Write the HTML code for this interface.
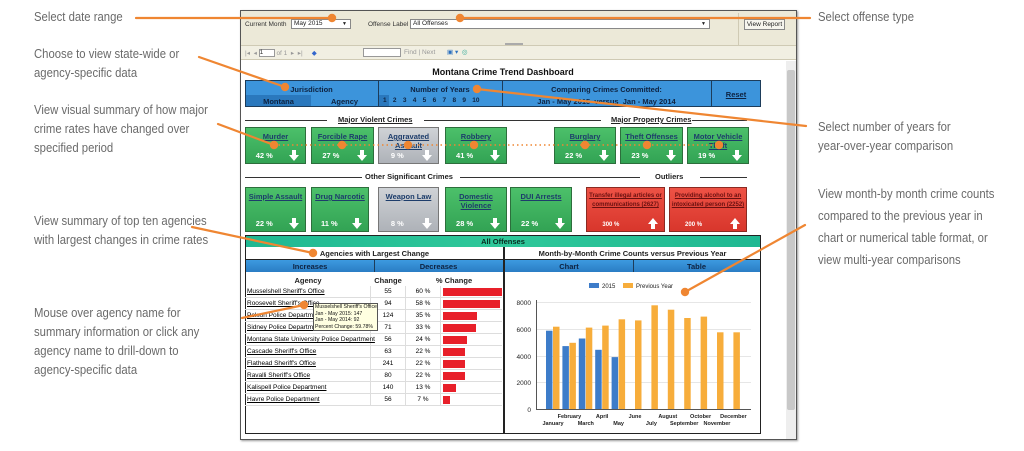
<!DOCTYPE html>
<html><head><meta charset="utf-8"><style>
*{margin:0;padding:0;box-sizing:border-box}
body{width:1024px;height:451px;background:#fff;position:relative;overflow:hidden;font-family:"Liberation Sans",sans-serif}
.a{position:absolute}
.ann{position:absolute;font-family:"Liberation Sans",sans-serif;font-size:13px;color:#6a6a6a;line-height:19px;white-space:nowrap;transform:scaleX(0.87);transform-origin:0 0}
.t{position:absolute;font-size:7.5px;font-weight:bold;text-align:center;border:1px solid #2d6e3c;background:linear-gradient(#4cc06a,#32a354);color:#1d3d6b}
.t.g{background:linear-gradient(#cfd2d6,#aeb2b8);border-color:#777}
.t.r{background:linear-gradient(#ee5245,#d8362c);border-color:#8a2a22;color:#6a1010}
.t .n{text-decoration:underline;margin-top:4px;line-height:9px}
.t .p{position:absolute;bottom:3px;left:0;width:62%;text-align:center;color:#fff}
.t svg{position:absolute;right:6px;bottom:2px}
.s{font-size:7.5px;font-weight:bold;color:#222}
.sm{font-size:6.5px;color:#222}
.row{position:absolute;left:245px;width:257px;height:12px;border-bottom:1px solid #ddd;font-size:6.5px;line-height:12px}
.row span{position:absolute;white-space:nowrap}
</style></head><body>

<div class="ann" style="left:34px;top:7px">Select date range</div>
<div class="ann" style="left:34px;top:44px">Choose to view state-wide or<br>agency-specific data</div>
<div class="ann" style="left:34px;top:100px">View visual summary of how major<br>crime rates have changed over<br>specified period</div>
<div class="ann" style="left:34px;top:211px">View summary of top ten agencies<br>with largest changes in crime rates</div>
<div class="ann" style="left:34px;top:303px">Mouse over agency name for<br>summary information or click any<br>agency name to drill-down to<br>agency-specific data</div>
<div class="ann" style="left:818px;top:7px">Select offense type</div>
<div class="ann" style="left:818px;top:117px">Select number of years for<br>year-over-year comparison</div>
<div class="ann" style="left:818px;top:183px;line-height:22px">View month-by month crime counts<br>compared to the previous year in<br>chart or numerical table format, or<br>view multi-year comparisons</div>

<div class="a" style="left:240px;top:10px;width:557px;height:430px;border:1px solid #555;background:#fff;box-shadow:1px 1px 2px #999"></div>
<div class="a" style="left:241px;top:11px;width:555px;height:35px;background:#ece9d8;border-bottom:1px solid #cfcab4"></div>
<div class="a" style="left:241px;top:46px;width:555px;height:14px;background:#f1efe2;border-bottom:1px solid #cfcab4"></div>
<div class="a sm" style="left:245px;top:21px;color:#333">Current Month</div>
<div class="a sm" style="left:291px;top:19px;width:60px;height:10px;border:1px solid #888;background:#fff;padding-left:2px;line-height:8px">May 2015<span style="position:absolute;right:3px;font-size:5px">▼</span></div>
<div class="a sm" style="left:368px;top:21px;color:#333">Offense Label</div>
<div class="a sm" style="left:410px;top:19px;width:300px;height:10px;border:1px solid #888;background:#fff;padding-left:2px;line-height:8px">All Offenses<span style="position:absolute;right:3px;font-size:5px">▼</span></div>
<div class="a" style="left:738px;top:13px;width:1px;height:32px;background:#cfcab4"></div>
<div class="a sm" style="left:744px;top:19px;width:41px;height:11px;border:1px solid #888;background:#f6f5ee;text-align:center;line-height:9px">View Report</div>
<div class="a" style="left:505px;top:43px;width:18px;height:2px;background:#aaa"></div>
<div class="a sm" style="left:245px;top:49px;color:#999">|◂ &nbsp;◂ <span style="display:inline-block;width:16px;height:8px;border:1px solid #999;background:#fff;vertical-align:middle;color:#333;line-height:6px">1</span> of 1 &nbsp;▸ &nbsp;▸| &nbsp;&nbsp;&nbsp;&nbsp;<span style="color:#36c">◆</span></div>
<div class="a" style="left:363px;top:48px;width:38px;height:9px;border:1px solid #999;background:#fff"></div>
<div class="a sm" style="left:404px;top:49px;color:#999">Find | Next</div>
<div class="a sm" style="left:447px;top:48px;color:#2a6fbf">▣ ▾ &nbsp;<span style="color:#3a9">◎</span></div>
<div class="a" style="left:786px;top:61px;width:10px;height:378px;background:#eee"></div>
<div class="a" style="left:787px;top:70px;width:8px;height:340px;background:#c8c8c8;border-radius:2px"></div>

<div class="a" style="left:245px;top:67px;width:516px;text-align:center;font-size:9px;font-weight:bold;color:#111">Montana Crime Trend Dashboard</div>

<div class="a" style="left:245px;top:80px;width:516px;height:27px;background:#3c94db;border:1px solid #1d3c5a"></div>
<div class="a" style="left:246px;top:95px;width:65px;height:11px;background:#2a78bd"></div>
<div class="a" style="left:378px;top:81px;width:1px;height:25px;background:#1d3c5a"></div>
<div class="a" style="left:502px;top:81px;width:1px;height:25px;background:#1d3c5a"></div>
<div class="a" style="left:711px;top:81px;width:1px;height:25px;background:#1d3c5a"></div>
<div class="a" style="left:379px;top:95px;width:10px;height:11px;background:#2a78bd"></div>
<div class="a s" style="left:245px;top:85px;width:133px;text-align:center;color:#0d2240">Jurisdiction</div>
<div class="a s" style="left:246px;top:97px;width:65px;text-align:center;color:#0d2240">Montana</div>
<div class="a s" style="left:311px;top:97px;width:67px;text-align:center;color:#0d2240">Agency</div>
<div class="a s" style="left:378px;top:85px;width:124px;text-align:center;color:#0d2240">Number of Years</div>
<div class="a" style="left:383px;top:97px;font-size:6.5px;font-weight:bold;color:#0d2240;word-spacing:4.5px">1 2 3 4 5 6 7 8 9 10</div>
<div class="a s" style="left:502px;top:85px;width:209px;text-align:center;color:#0d2240">Comparing Crimes Committed:</div>
<div class="a s" style="left:502px;top:97px;width:209px;text-align:center;color:#0d2240">Jan - May 2015 &nbsp;versus &nbsp;Jan - May 2014</div>
<div class="a s" style="left:711px;top:90px;width:50px;text-align:center;color:#0d2240;text-decoration:underline">Reset</div>

<div class="a" style="left:245px;top:120px;width:82px;height:1px;background:#333"></div>
<div class="a s" style="left:338px;top:115px;text-decoration:underline">Major Violent Crimes</div>
<div class="a" style="left:424px;top:120px;width:177px;height:1px;background:#333"></div>
<div class="a s" style="left:611px;top:115px;text-decoration:underline">Major Property Crimes</div>
<div class="a" style="left:692px;top:120px;width:55px;height:1px;background:#333"></div>

<div class="a" style="left:245px;top:177px;width:117px;height:1px;background:#333"></div>
<div class="a s" style="left:365px;top:172px">Other Significant Crimes</div>
<div class="a" style="left:460px;top:177px;width:180px;height:1px;background:#333"></div>
<div class="a s" style="left:655px;top:172px">Outliers</div>
<div class="a" style="left:700px;top:177px;width:47px;height:1px;background:#333"></div>

<svg width="0" height="0" style="position:absolute"><defs>
<symbol id="dn" viewBox="0 0 10 11"><path d="M3 0h4v5h3l-5 6-5-6h3z" fill="#fff"/></symbol>
<symbol id="up" viewBox="0 0 10 11"><path d="M3 11h4v-5h3l-5-6-5 6h3z" fill="#fff"/></symbol>
</defs></svg>

<div class="t" style="left:245px;top:127px;width:61px;height:37px"><div class="n">Murder</div><div class="p">42 %</div><svg width="10" height="11"><use href="#dn"/></svg></div>
<div class="t" style="left:311px;top:127px;width:63px;height:37px"><div class="n">Forcible Rape</div><div class="p">27 %</div><svg width="10" height="11"><use href="#dn"/></svg></div>
<div class="t g" style="left:378px;top:127px;width:61px;height:37px"><div class="n">Aggravated<br>Assault</div><div class="p">9 %</div><svg width="10" height="11"><use href="#dn"/></svg></div>
<div class="t" style="left:445px;top:127px;width:62px;height:37px"><div class="n">Robbery</div><div class="p">41 %</div><svg width="10" height="11"><use href="#dn"/></svg></div>
<div class="t" style="left:554px;top:127px;width:62px;height:37px"><div class="n">Burglary</div><div class="p">22 %</div><svg width="10" height="11"><use href="#dn"/></svg></div>
<div class="t" style="left:620px;top:127px;width:63px;height:37px"><div class="n">Theft Offenses</div><div class="p">23 %</div><svg width="10" height="11"><use href="#dn"/></svg></div>
<div class="t" style="left:687px;top:127px;width:62px;height:37px"><div class="n">Motor Vehicle<br>Theft</div><div class="p">19 %</div><svg width="10" height="11"><use href="#dn"/></svg></div>

<div class="t" style="left:245px;top:187px;width:61px;height:45px"><div class="n">Simple Assault</div><div class="p">22 %</div><svg width="10" height="11"><use href="#dn"/></svg></div>
<div class="t" style="left:311px;top:187px;width:58px;height:45px"><div class="n">Drug Narcotic</div><div class="p">11 %</div><svg width="10" height="11"><use href="#dn"/></svg></div>
<div class="t g" style="left:378px;top:187px;width:61px;height:45px"><div class="n">Weapon Law</div><div class="p">8 %</div><svg width="10" height="11"><use href="#dn"/></svg></div>
<div class="t" style="left:445px;top:187px;width:62px;height:45px"><div class="n">Domestic<br>Violence</div><div class="p">28 %</div><svg width="10" height="11"><use href="#dn"/></svg></div>
<div class="t" style="left:510px;top:187px;width:62px;height:45px"><div class="n">DUI Arrests</div><div class="p">22 %</div><svg width="10" height="11"><use href="#dn"/></svg></div>
<div class="t r" style="left:586px;top:187px;width:79px;height:45px;font-size:6px"><div class="n">Transfer illegal articles or<br>communications (2627)</div><div class="p">300 %</div><svg width="10" height="11"><use href="#up"/></svg></div>
<div class="t r" style="left:669px;top:187px;width:78px;height:45px;font-size:6px"><div class="n">Providing alcohol to an<br>intoxicated person (2252)</div><div class="p">200 %</div><svg width="10" height="11"><use href="#up"/></svg></div>

<div class="a" style="left:245px;top:235px;width:516px;height:199px;border:1px solid #222"></div>
<div class="a s" style="left:246px;top:236px;width:514px;height:11px;background:linear-gradient(90deg,#1fb892,#2fc89a,#1fb892);text-align:center;line-height:11px;color:#0a2a20">All Offenses</div>
<div class="a" style="left:503px;top:247px;width:2px;height:187px;background:#222"></div>
<div class="a s" style="left:246px;top:248px;width:257px;height:12px;text-align:center;line-height:12px;border-bottom:1px solid #222">Agencies with Largest Change</div>
<div class="a s" style="left:505px;top:248px;width:255px;height:12px;text-align:center;line-height:12px;border-bottom:1px solid #222">Month-by-Month Crime Counts versus Previous Year</div>
<div class="a s" style="left:246px;top:260px;width:257px;height:12px;background:linear-gradient(#3d9ae0,#2a7dc4);line-height:14px;color:#0d2240"><span style="position:absolute;left:0;width:128px;text-align:center">Increases</span><span style="position:absolute;left:128px;width:129px;text-align:center">Decreases</span></div>
<div class="a" style="left:374px;top:260px;width:1px;height:12px;background:#1d3c5a"></div>
<div class="a s" style="left:505px;top:260px;width:255px;height:12px;background:linear-gradient(#3d9ae0,#2a7dc4);line-height:14px;color:#0d2240"><span style="position:absolute;left:0;width:128px;text-align:center">Chart</span><span style="position:absolute;left:128px;width:127px;text-align:center">Table</span></div>
<div class="a" style="left:633px;top:260px;width:1px;height:12px;background:#1d3c5a"></div>
<div class="a s" style="left:246px;top:276px;width:124px;text-align:center">Agency</div>
<div class="a s" style="left:370px;top:276px;width:36px;text-align:center">Change</div>
<div class="a s" style="left:406px;top:276px;width:96px;text-align:center">% Change</div>
<div class="a" style="left:370px;top:286px;width:1px;height:120px;background:#ddd"></div>
<div class="a" style="left:405px;top:286px;width:1px;height:120px;background:#ddd"></div>
<div class="a" style="left:440px;top:286px;width:1px;height:120px;background:#ddd"></div>

<div class="row" style="top:286px"><span style="left:2px;text-decoration:underline">Musselshell Sheriff's Office</span><span style="left:125px;width:36px;text-align:center">55</span><span style="left:160px;width:36px;text-align:center">60 %</span><span style="left:198px;top:2px;width:59px;height:8px;background:#e8202a"></span></div>
<div class="row" style="top:298px"><span style="left:2px;text-decoration:underline">Roosevelt Sheriff's Office</span><span style="left:125px;width:36px;text-align:center">94</span><span style="left:160px;width:36px;text-align:center">58 %</span><span style="left:198px;top:2px;width:57px;height:8px;background:#e8202a"></span></div>
<div class="row" style="top:310px"><span style="left:2px;text-decoration:underline">Polson Police Department</span><span style="left:125px;width:36px;text-align:center">124</span><span style="left:160px;width:36px;text-align:center">35 %</span><span style="left:198px;top:2px;width:34px;height:8px;background:#e8202a"></span></div>
<div class="row" style="top:322px"><span style="left:2px;text-decoration:underline">Sidney Police Department</span><span style="left:125px;width:36px;text-align:center">71</span><span style="left:160px;width:36px;text-align:center">33 %</span><span style="left:198px;top:2px;width:33px;height:8px;background:#e8202a"></span></div>
<div class="row" style="top:334px"><span style="left:2px;text-decoration:underline">Montana State University Police Department</span><span style="left:125px;width:36px;text-align:center">56</span><span style="left:160px;width:36px;text-align:center">24 %</span><span style="left:198px;top:2px;width:24px;height:8px;background:#e8202a"></span></div>
<div class="row" style="top:346px"><span style="left:2px;text-decoration:underline">Cascade Sheriff's Office</span><span style="left:125px;width:36px;text-align:center">63</span><span style="left:160px;width:36px;text-align:center">22 %</span><span style="left:198px;top:2px;width:22px;height:8px;background:#e8202a"></span></div>
<div class="row" style="top:358px"><span style="left:2px;text-decoration:underline">Flathead Sheriff's Office</span><span style="left:125px;width:36px;text-align:center">241</span><span style="left:160px;width:36px;text-align:center">22 %</span><span style="left:198px;top:2px;width:22px;height:8px;background:#e8202a"></span></div>
<div class="row" style="top:370px"><span style="left:2px;text-decoration:underline">Ravalli Sheriff's Office</span><span style="left:125px;width:36px;text-align:center">80</span><span style="left:160px;width:36px;text-align:center">22 %</span><span style="left:198px;top:2px;width:22px;height:8px;background:#e8202a"></span></div>
<div class="row" style="top:382px"><span style="left:2px;text-decoration:underline">Kalispell Police Department</span><span style="left:125px;width:36px;text-align:center">140</span><span style="left:160px;width:36px;text-align:center">13 %</span><span style="left:198px;top:2px;width:13px;height:8px;background:#e8202a"></span></div>
<div class="row" style="top:394px"><span style="left:2px;text-decoration:underline">Havre Police Department</span><span style="left:125px;width:36px;text-align:center">56</span><span style="left:160px;width:36px;text-align:center">7 %</span><span style="left:198px;top:2px;width:7px;height:8px;background:#e8202a"></span></div>

<svg class="a" style="left:0;top:0" width="1024" height="451" font-family="Liberation Sans, sans-serif">
<g stroke="#e6e6e6" stroke-width="1">
<line x1="536" y1="302.5" x2="751" y2="302.5"/><line x1="536" y1="329.5" x2="751" y2="329.5"/><line x1="536" y1="356.5" x2="751" y2="356.5"/><line x1="536" y1="382.5" x2="751" y2="382.5"/></g>
<line x1="536.5" y1="300" x2="536.5" y2="409" stroke="#555"/>
<line x1="536" y1="409.5" x2="751" y2="409.5" stroke="#555"/>
<g font-size="6.5" fill="#222" text-anchor="end"><text x="531" y="305">8000</text><text x="531" y="332">6000</text><text x="531" y="359">4000</text><text x="531" y="385">2000</text><text x="531" y="412">0</text></g>
<rect x="589" y="283" width="10" height="5" fill="#3d7cc9"/><text x="602" y="288" font-size="6" fill="#222">2015</text>
<rect x="623" y="283" width="10" height="5" fill="#f7ad3b"/><text x="636" y="288" font-size="6" fill="#222">Previous Year</text>
<g fill="#3d7cc9">
<rect x="546" y="330.7" width="6.5" height="78.3"/><rect x="562.4" y="346.1" width="6.5" height="62.9"/><rect x="578.8" y="338.5" width="6.5" height="70.5"/><rect x="595.2" y="349.8" width="6.5" height="59.2"/><rect x="611.6" y="357.1" width="6.5" height="51.9"/></g>
<g fill="#f7ad3b">
<rect x="553" y="326.7" width="6.5" height="82.3"/><rect x="569.4" y="342.8" width="6.5" height="66.2"/><rect x="585.8" y="327.6" width="6.5" height="81.4"/><rect x="602.2" y="325.6" width="6.5" height="83.4"/><rect x="618.6" y="319.3" width="6.5" height="89.7"/><rect x="635" y="320.4" width="6.5" height="88.6"/><rect x="651.4" y="305.3" width="6.5" height="103.7"/><rect x="667.8" y="309.7" width="6.5" height="99.3"/><rect x="684.2" y="318" width="6.5" height="91"/><rect x="700.6" y="316.6" width="6.5" height="92.4"/><rect x="717" y="332.3" width="6.5" height="76.7"/><rect x="733.4" y="332.3" width="6.5" height="76.7"/></g>
<g font-size="5.5" fill="#222" text-anchor="middle" font-weight="bold">
<text x="553" y="425">January</text><text x="569.4" y="418">February</text><text x="585.8" y="425">March</text><text x="602.2" y="418">April</text><text x="618.6" y="425">May</text><text x="635" y="418">June</text><text x="651.4" y="425">July</text><text x="667.8" y="418">August</text><text x="684.2" y="425">September</text><text x="700.6" y="418">October</text><text x="717" y="425">November</text><text x="733.4" y="418">December</text></g>
</svg>

<div class="a" style="left:313px;top:303px;width:65px;height:28px;background:#ffffe1;border:1px solid #555;font-size:5.2px;line-height:6.5px;padding-left:1px;color:#111;white-space:nowrap;overflow:hidden">Musselshell Sheriff's Office<br>Jan - May 2015: 147<br>Jan - May 2014: 92<br>Percent Change: 59.78%</div>

<svg class="a" style="left:0;top:0" width="1024" height="451">
<g stroke="#ef8632" stroke-width="2.2" fill="none" stroke-linecap="round">
<line x1="136" y1="18" x2="332" y2="18"/>
<line x1="460" y1="18" x2="810" y2="18"/>
<line x1="199" y1="57" x2="285" y2="87"/>
<line x1="218" y1="124" x2="274" y2="145"/>
<line x1="477" y1="89" x2="806" y2="126"/>
<line x1="192" y1="227" x2="313" y2="253"/>
<line x1="242" y1="318" x2="304" y2="305"/>
<line x1="685" y1="292" x2="805" y2="225"/>
</g>
<line x1="274" y1="145" x2="719" y2="145" stroke="#ef8632" stroke-width="1.5" stroke-dasharray="1.5 3"/>
<g fill="#ef8632">
<circle cx="332" cy="18" r="4.2"/><circle cx="460" cy="18" r="4.2"/><circle cx="285" cy="87" r="4.2"/>
<circle cx="274" cy="145" r="4.2"/><circle cx="342" cy="145" r="4.2"/><circle cx="408" cy="145" r="4.2"/><circle cx="474" cy="145" r="4.2"/><circle cx="585" cy="145" r="4.2"/><circle cx="647" cy="145" r="4.2"/><circle cx="719" cy="145" r="4.2"/>
<circle cx="477" cy="89" r="4.2"/><circle cx="313" cy="253" r="4.2"/><circle cx="304" cy="305" r="4.2"/><circle cx="685" cy="292" r="4.2"/>
</g>
</svg>
</body></html>
